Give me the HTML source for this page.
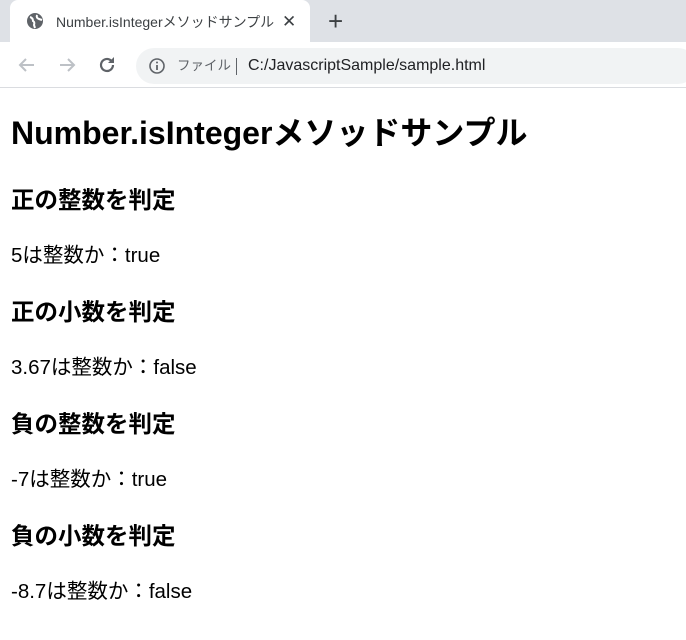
<!DOCTYPE html>
<html><head><meta charset="utf-8"><style>
*{margin:0;padding:0;box-sizing:border-box}
body{width:686px;height:640px;overflow:hidden;background:#fff;font-family:"Liberation Sans","Noto Sans CJK JP",sans-serif;position:relative}
.strip{position:absolute;left:0;top:0;width:686px;height:42px;background:#dee1e6}
.tab{position:absolute;left:10px;top:0;width:300px;height:42px;background:#fff;border-radius:8px 8px 0 0}
.tab .t{position:absolute;left:46px;top:12px;font-size:14px;color:#3c4043;white-space:nowrap}
.x{position:absolute;left:272px;top:12px;font-size:17px;color:#3c4043}
.plus{position:absolute;left:328px;top:6px;font-size:26px;color:#3c4043}
.bar{position:absolute;left:0;top:42px;width:686px;height:46px;background:#fff;border-bottom:1px solid #dadce0}
.omni{position:absolute;left:136px;top:6px;width:560px;height:36px;background:#f1f3f4;border-radius:18px}
.omni span{position:absolute;top:0;line-height:36px;font-size:16px;white-space:nowrap}
.txt{position:absolute;left:11px;white-space:nowrap;color:#000;line-height:1}
h1{font-size:32px;font-weight:bold}
.h3{font-size:23.5px;font-weight:bold}
.p{font-size:20.5px}
</style></head><body>
<div class="strip"></div>
<div class="tab">
<svg style="position:absolute;left:16px;top:12px" width="18" height="18" viewBox="0 0 18 18"><circle cx="9" cy="9" r="8" fill="#5f6368"/><path d="M4 5 Q7 6 7 9 Q9 10 8 13 L9 16 M11 3 Q10 6 13 7 L16 8" stroke="#fff" stroke-width="2" fill="none"/></svg>
<div class="t">Number.isIntegerメソッドサンプル</div>
<div class="x">✕</div>
</div>
<div class="plus">+</div>
<div class="bar">
<svg style="position:absolute;left:16px;top:12px" width="22" height="22" viewBox="0 0 22 22"><path d="M18 11H5M10 5l-6 6 6 6" stroke="#bdc1c6" stroke-width="2" fill="none"/></svg>
<svg style="position:absolute;left:56px;top:12px" width="22" height="22" viewBox="0 0 22 22"><path d="M4 11h13M12 5l6 6-6 6" stroke="#bdc1c6" stroke-width="2" fill="none"/></svg>
<svg style="position:absolute;left:96px;top:12px" width="22" height="22" viewBox="0 0 22 22"><path d="M17 11a6 6 0 1 1-2-4.5" stroke="#5f6368" stroke-width="2.2" fill="none"/><path d="M18 3v6h-6z" fill="#5f6368"/></svg>
<div class="omni">
<svg style="position:absolute;left:12px;top:9px" width="18" height="18" viewBox="0 0 18 18"><circle cx="9" cy="9" r="7" stroke="#5f6368" stroke-width="1.6" fill="none"/><path d="M9 8v5" stroke="#5f6368" stroke-width="1.8"/><circle cx="9" cy="5.5" r="1" fill="#5f6368"/></svg>
<span style="left:41px;color:#5f6368;font-size:13.5px">ファイル</span>
<div style="position:absolute;left:100px;top:10px;width:1px;height:17px;background:#5f6368"></div>
<span style="left:112px;color:#202124">C:/JavascriptSample/sample.html</span>
</div>
</div>
<h1 class="txt" style="top:117px">Number.isIntegerメソッドサンプル</h1>
<div class="txt h3" style="top:189px">正の整数を判定</div>
<div class="txt p" style="top:246px">5は整数か：true</div>
<div class="txt h3" style="top:301px">正の小数を判定</div>
<div class="txt p" style="top:358px">3.67は整数か：false</div>
<div class="txt h3" style="top:413px">負の整数を判定</div>
<div class="txt p" style="top:470px">-7は整数か：true</div>
<div class="txt h3" style="top:525px">負の小数を判定</div>
<div class="txt p" style="top:582px">-8.7は整数か：false</div>
</body></html>
